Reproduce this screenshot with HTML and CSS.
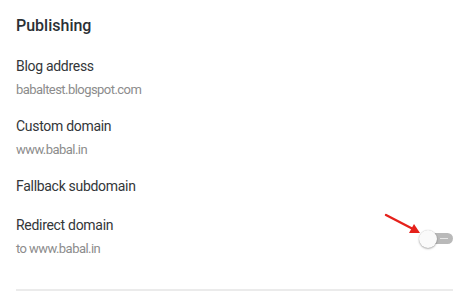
FILE: index.html
```html
<!DOCTYPE html>
<html>
<head>
<meta charset="utf-8">
<link rel="stylesheet" href="styles.css">
</head>
<body>
<main class="panel">
  <h2 class="title">Publishing</h2>
  <div class="items">
    <div class="item">
      <div class="label">Blog address</div>
      <div class="value">babaltest.blogspot.com</div>
    </div>
    <div class="item">
      <div class="label">Custom domain</div>
      <div class="value">www.babal.in</div>
    </div>
    <div class="item item-single">
      <div class="label">Fallback subdomain</div>
    </div>
    <div class="item item-row">
      <div class="item-text">
        <div class="label">Redirect domain</div>
        <div class="value">to www.babal.in</div>
      </div>
      <div class="toggle">
        <div class="track"><span class="track-mark"></span></div>
        <div class="knob"></div>
        <svg class="arrow" width="40" height="26" viewBox="0 0 40 26">
          <line x1="3" y1="3" x2="30" y2="17" stroke="#e5211b" stroke-width="2.4" stroke-linecap="round"/>
          <polygon points="37,21 26,21 31,12" fill="#e5211b"/>
        </svg>
      </div>
    </div>
  </div>
  <div class="divider"></div>
</main>
</body>
</html>
```
FILE: styles.css
```css
* { box-sizing: border-box; }
html, body {
  margin: 0;
  padding: 0;
  background: #ffffff;
}
body {
  font-family: Roboto, "Liberation Sans", Arial, sans-serif;
  width: 474px;
  height: 304px;
  overflow: hidden;
}
.panel {
  padding: 16px 21px 0 16px;
}
.title {
  margin: 0;
  font-size: 16px;
  line-height: 20px;
  font-weight: 500;
  color: #2b3035;
}
.items {
  margin-top: 20px;
  display: flex;
  flex-direction: column;
  gap: 16px;
}
.item-single {
  padding-bottom: 3px;
}
.label {
  font-size: 14px;
  line-height: 20px;
  letter-spacing: -0.3px;
  color: #333639;
}
.value {
  margin-top: 4px;
  font-size: 13px;
  line-height: 20px;
  letter-spacing: -0.55px;
  color: #8c8c8c;
}
.item-row {
  display: flex;
  align-items: center;
  justify-content: space-between;
}
.toggle {
  position: relative;
  width: 34px;
  height: 18px;
  margin-top: 3px;
  display: flex;
  align-items: center;
}
.track {
  margin-left: 4px;
  width: 30px;
  height: 11px;
  border-radius: 6px;
  background: #b9b9b9;
  display: flex;
  align-items: center;
  justify-content: flex-end;
  padding-right: 5px;
}
.track-mark {
  width: 8px;
  height: 1px;
  background: #e6e6e6;
}
.knob {
  position: absolute;
  left: 0;
  top: 0;
  width: 18px;
  height: 18px;
  border-radius: 50%;
  background: #fafafa;
  box-shadow: 0 1px 2px rgba(0,0,0,0.3), 0 0 1px rgba(0,0,0,0.2);
}
.arrow {
  position: absolute;
  left: -36px;
  top: -18px;
}
.divider {
  margin-top: 30px;
  height: 2px;
  background: #ebebeb;
}
```
